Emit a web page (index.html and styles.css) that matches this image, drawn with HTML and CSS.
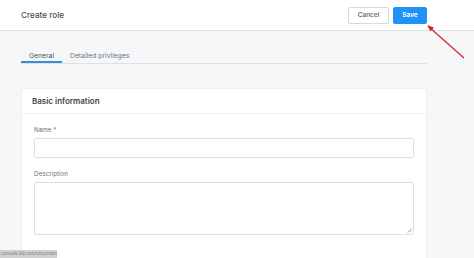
FILE: index.html
```html
<!DOCTYPE html>
<html>
<head>
<meta charset="utf-8">
<link rel="stylesheet" href="styles.css">
</head>
<body>
<header class="topbar">
  <div class="title">Create role</div>
  <div class="actions">
    <button class="btn btn-cancel">Cancel</button>
    <button class="btn btn-save">Save</button>
  </div>
</header>
<main class="content">
  <nav class="tabs">
    <span class="tab active">General</span>
    <span class="tab">Detailed privileges</span>
  </nav>
  <section class="card">
    <div class="card-head">Basic information</div>
    <div class="card-body">
      <label class="field-label">Name *</label>
      <div class="input"></div>
      <label class="field-label desc">Description</label>
      <div class="textarea">
        <svg class="grip" width="5" height="5" viewBox="0 0 5 5"><path d="M4.5 0.5 L0.5 4.5 M4.5 2.5 L2.5 4.5" stroke="#999" stroke-width="0.8"/></svg>
      </div>
    </div>
  </section>
</main>
<svg class="arrow" width="50" height="45" viewBox="0 0 50 45">
  <path d="M40 35 L5 4" stroke="#d9262b" stroke-width="1.3" fill="none"/>
  <path d="M3 2 L10 4.5 L6.5 8.5 Z" fill="#d9262b"/>
</svg>
<div class="status">console.lab.net/role/create</div>
</body>
</html>
```

FILE: styles.css
```css
* { box-sizing: border-box; }
html, body { margin: 0; padding: 0; }
body {
  width: 474px;
  height: 258px;
  overflow: hidden;
  background: #f6f7f9;
  font-family: Inter, "Noto Sans", sans-serif;
  position: relative;
}
.topbar {
  height: 31px;
  background: #ffffff;
  border-bottom: 1px solid #dcdfe3;
  display: flex;
  align-items: center;
  justify-content: space-between;
  padding: 0 47px 0 21px;
}
.title {
  font-size: 8.2px;
  font-weight: 500;
  color: #4a4f57;
  margin-top: -1px;
}
.actions {
  display: flex;
  gap: 4px;
}
.btn {
  height: 17px;
  font-family: Inter, "Noto Sans", sans-serif;
  font-size: 6.5px;
  font-weight: 500;
  border-radius: 2px;
  padding: 0;
  display: flex;
  align-items: center;
  justify-content: center;
}
.btn-cancel {
  width: 41px;
  background: #fff;
  border: 1px solid #d5d8dc;
  color: #555a61;
}
.btn-save {
  width: 34px;
  background: #1f93f8;
  border: 1px solid #1f93f8;
  color: #ffffff;
  font-weight: 600;
}
.content {
  padding: 18px 47px 0 21px;
}
.tabs {
  display: flex;
  border-bottom: 1px solid #dde0e4;
  height: 15px;
}
.tab {
  font-size: 6.8px;
  color: #70757c;
  padding: 0 7px 0 8px;
  line-height: 13px;
}
.tab.active {
  color: #4a4f57;
  border-bottom: 2px solid #3a8fd6;
  width: 41px;
}
.card {
  margin-top: 24px;
  background: #ffffff;
  border: 1px solid #eceef1;
  height: 180px;
}
.card-head {
  height: 25px;
  border-bottom: 1px solid #eceef1;
  display: flex;
  align-items: center;
  padding-left: 10px;
  font-size: 8px;
  font-weight: 600;
  color: #3f444b;
}
.card-body {
  padding: 12px 12px 0 12px;
  display: flex;
  flex-direction: column;
}
.field-label {
  font-size: 6.3px;
  color: #6c7178;
  line-height: 8px;
  margin-bottom: 4px;
}
.field-label.desc { margin-top: 12px; }
.input {
  height: 20px;
  border: 1px solid #dcdfe3;
  border-radius: 2px;
}
.textarea {
  height: 53px;
  border: 1px solid #dcdfe3;
  border-radius: 2px;
  position: relative;
}
.grip {
  position: absolute;
  right: 1px;
  bottom: 1px;
}
.arrow {
  position: absolute;
  left: 424px;
  top: 23px;
}
.status {
  position: absolute;
  left: 0;
  bottom: 0;
  width: 57px;
  height: 8px;
  background: #cfd0d2;
  color: #7a7c80;
  font-size: 4.5px;
  line-height: 8px;
  padding-left: 1px;
  white-space: nowrap;
  overflow: hidden;
}
```
